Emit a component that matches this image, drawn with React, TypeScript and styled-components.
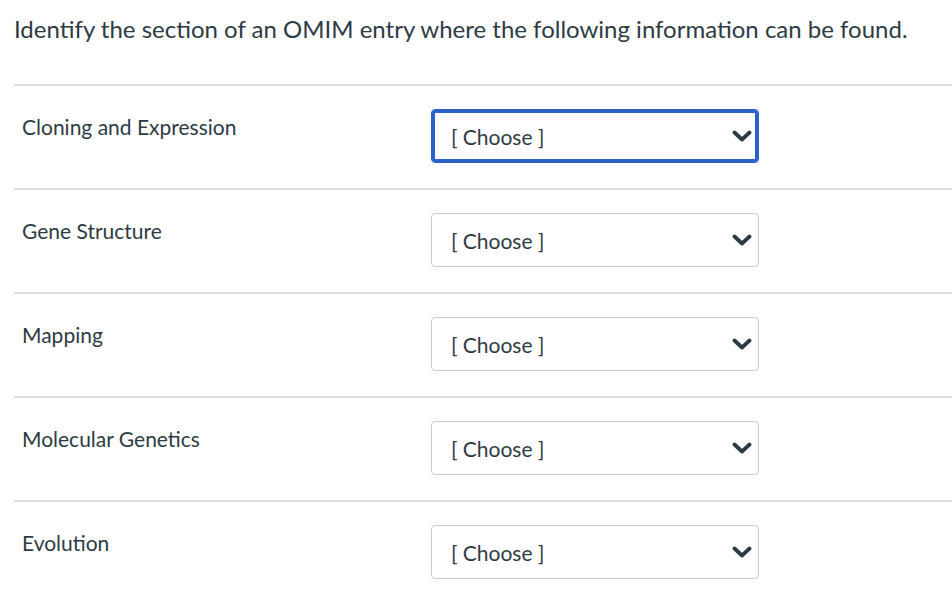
import React from "react";
import styled, { createGlobalStyle } from "styled-components";

const GlobalStyle = createGlobalStyle`
  html, body {
    margin: 0;
    padding: 0;
    background: #ffffff;
  }
  body {
    font-family: Lato, "Open Sans", "Liberation Sans", sans-serif;
    color: #2d3b45;
  }
`;

const Page = styled.div`
  padding: 0 0 0 14px;
`;

const Question = styled.h2`
  margin: 0;
  padding: 14px 0 0 0;
  height: 84px;
  box-sizing: border-box;
  font-size: 24px;
  font-weight: 400;
  line-height: 30px;
  color: #2d3b45;
`;

const Row = styled.div`
  display: flex;
  align-items: flex-start;
  border-top: 2px solid #dedede;
  padding: 23px 0 25px 8px;
`;

const Label = styled.div`
  width: 409px;
  flex: none;
  padding-top: 6px;
  font-size: 21px;
  line-height: 24px;
  color: #2d3b45;
`;

const SelectBox = styled.div<{ $focused?: boolean }>`
  position: relative;
  width: 328px;
  height: 54px;
  box-sizing: border-box;
  display: flex;
  align-items: center;
  justify-content: space-between;
  padding: 0 6px 0 19px;
  border: 1px solid #c7cdd1;
  border-radius: 4px;
  background: #ffffff;
  font-size: 21px;
  color: #2d3b45;
  box-shadow: ${(p) => (p.$focused ? "inset 0 0 0 3px #2a62c9" : "none")};
  ${(p) => (p.$focused ? "border-color: #2a62c9;" : "")}
`;

const Chevron = () => (
  <svg width="20" height="12" viewBox="0 0 20 12">
    <path
      d="M2.5 2.5 L10 9.5 L17.5 2.5"
      fill="none"
      stroke="#2d3b45"
      strokeWidth="3.8"
      strokeLinecap="round"
      strokeLinejoin="round"
    />
  </svg>
);

const items = [
  "Cloning and Expression",
  "Gene Structure",
  "Mapping",
  "Molecular Genetics",
  "Evolution",
];

export default function App() {
  return (
    <Page>
      <GlobalStyle />
      <Question>
        Identify the section of an OMIM entry where the following information
        can be found.
      </Question>
      {items.map((label, i) => (
        <Row key={label}>
          <Label>{label}</Label>
          <SelectBox $focused={i === 0}>
            <span>[ Choose ]</span>
            <Chevron />
          </SelectBox>
        </Row>
      ))}
    </Page>
  );
}
